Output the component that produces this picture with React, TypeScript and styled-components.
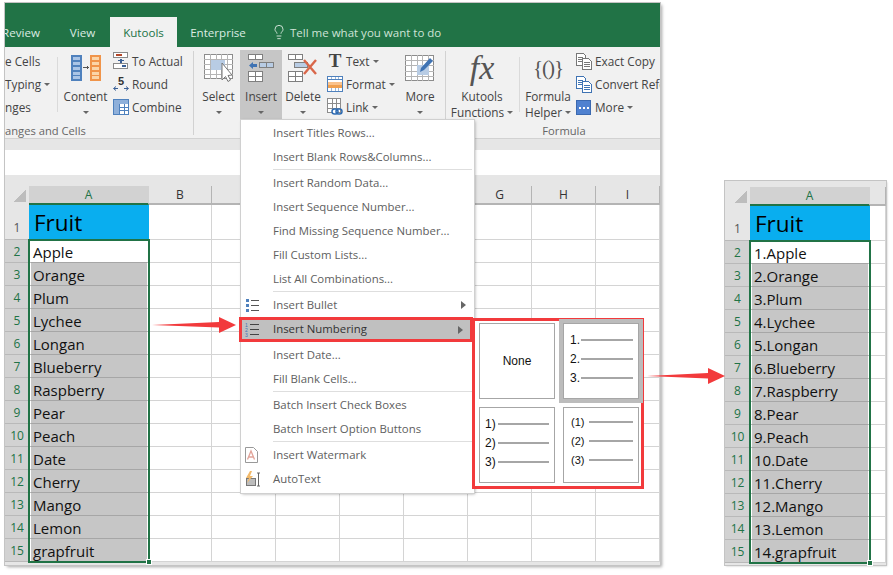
import React, { FunctionComponent } from 'react'
import styled, { createGlobalStyle } from 'styled-components'
import { Lightbulb } from 'lucide-react'

const UI_FONT = '"Open Sans", "Noto Sans", sans-serif'

const GlobalStyle = createGlobalStyle`
	html, body {
		margin: 0;
		background: #fff;
		font-family: ${UI_FONT};
	}
`

const Page = styled.div`
	position: relative;
	width: 893px;
	height: 575px;
	overflow: hidden;
	display: flex;
	align-items: flex-start;
	padding: 3px 0 0 5px;
	box-sizing: border-box;
	background: #fff;
`

const ExcelWindow = styled.div`
	position: relative;
	flex: none;
	width: 655px;
	height: 562px;
	display: flex;
	flex-direction: column;
	background: #e6e6e6;
	box-shadow: 0 0 0 1px #c4c4c4, 2px 2px 3px rgba(0, 0, 0, .35);
`

const TitleBar = styled.div`
	height: 44px;
	flex: none;
	display: flex;
	align-items: flex-end;
	background: #217346;
	overflow: hidden;
`

const Tab = styled.div<{ $w: number; $active?: boolean }>`
	flex: none;
	width: ${p => p.$w}px;
	height: 30px;
	display: flex;
	align-items: center;
	justify-content: center;
	font-size: 11.6px;
	color: ${p => (p.$active ? '#217346' : '#dcebe2')};
	background: ${p => (p.$active ? '#f1f1f1' : 'transparent')};
`

const ClippedTab = styled(Tab)`
	justify-content: flex-end;
	padding-right: 15px;
	box-sizing: border-box;
	overflow: hidden;
	white-space: nowrap;
`

const TellMe = styled.div`
	margin-left: 12px;
	height: 30px;
	display: flex;
	align-items: center;
	gap: 3px;
	font-size: 11.5px;
	color: #cfe3d7;
`

const Ribbon = styled.div`
	height: 92px;
	flex: none;
	display: flex;
	background: #f1f1f1;
	border-bottom: 1px solid #d2d2d2;
	box-sizing: border-box;
	overflow: hidden;
`

const Group = styled.div<{ $w: number; $pad?: number }>`
	flex: none;
	width: ${p => p.$w}px;
	padding-left: ${p => p.$pad || 0}px;
	box-sizing: border-box;
	display: flex;
	flex-direction: column;
	overflow: hidden;
`

const GroupBody = styled.div`
	height: 73px;
	padding-top: 3px;
	box-sizing: border-box;
	display: flex;
	align-items: flex-start;
`

const GroupLabel = styled.div<{ $left?: number; $align?: string }>`
	margin-top: 3px;
	height: 16px;
	line-height: 16px;
	font-size: 11.2px;
	color: #666;
	white-space: nowrap;
	text-align: ${p => p.$align || 'left'};
	padding-left: ${p => p.$left || 0}px;
`

const GroupDivider = styled.div`
	flex: none;
	width: 1px;
	margin: 4px 0 3px;
	background: #d2d2d2;
`

const InnerDivider = styled.div<{ $right: number; $left?: number }>`
	flex: none;
	width: 1px;
	height: 55px;
	margin: 7px ${p => p.$right}px 0 ${p => p.$left || 0}px;
	background: #dadada;
`

const LargeButton = styled.div<{ $w: number; $gap?: number; $on?: boolean }>`
	flex: none;
	width: ${p => p.$w}px;
	height: 70px;
	margin-left: ${p => p.$gap || 0}px;
	display: flex;
	flex-direction: column;
	align-items: center;
	background: ${p => (p.$on ? '#c6c6c6' : 'transparent')};
	white-space: nowrap;
`

const LargeIcon = styled.div`
	height: 36px;
	flex: none;
	display: flex;
	align-items: center;
	justify-content: center;
`

const LargeLabel = styled.div<{ $first?: boolean }>`
	height: 16px;
	line-height: 16px;
	margin-top: ${p => (p.$first ? 2 : 0)}px;
	font-size: 11.8px;
	color: #444;
	display: flex;
	align-items: center;
	gap: 3px;
`

const CaretRow = styled.div`
	height: 16px;
	display: flex;
	align-items: center;
`

const Caret = styled.span`
	display: inline-block;
	flex: none;
	width: 0;
	height: 0;
	border-left: 3px solid transparent;
	border-right: 3px solid transparent;
	border-top: 3px solid #666;
`

const SmallStack = styled.div<{ $w: number; $gap?: number }>`
	flex: none;
	width: ${p => p.$w}px;
	margin-left: ${p => p.$gap || 0}px;
	display: flex;
	flex-direction: column;
	overflow: hidden;
`

const SmallRow = styled.div`
	height: 23px;
	box-sizing: border-box;
	padding-bottom: 1px;
	display: flex;
	align-items: center;
	gap: 3px;
	font-size: 11.8px;
	color: #444;
	white-space: nowrap;
`

const SmallIcon = styled.span`
	flex: none;
	width: 16px;
	height: 18px;
	display: flex;
	align-items: center;
	justify-content: center;
`

const TextGlyph = styled.span`
	font-family: "Liberation Serif", serif;
	font-weight: 700;
	font-size: 19px;
	line-height: 18px;
	color: #444;
`

const Band = styled.div<{ $h: number }>`
	flex: none;
	height: ${p => p.$h}px;
	background: #e6e6e6;
`

const FormulaBar = styled.div`
	flex: none;
	height: 25px;
	background: #fff;
`

// sheet

const SheetGrid = styled.div<{ $cols: string }>`
	position: relative;
	display: grid;
	grid-template-columns: ${p => p.$cols};
`

const Corner = styled.div`
	height: 19px;
	background: #e6e6e6;
	display: flex;
	justify-content: flex-end;
	align-items: flex-end;
	padding: 0 3px 3px 0;
	box-sizing: border-box;
`

const CornerMark = styled.div`
	width: 12px;
	height: 12px;
	background: linear-gradient(135deg, transparent 50%, #bdbdbd 50%);
`

const ColHead = styled.div<{ $on?: boolean }>`
	height: 19px;
	box-sizing: border-box;
	display: flex;
	align-items: center;
	justify-content: center;
	font-size: 12px;
	color: ${p => (p.$on ? '#217346' : '#333')};
	background: ${p => (p.$on ? '#d2d2d2' : '#e6e6e6')};
	border-right: 1px solid ${p => (p.$on ? '#d2d2d2' : '#b4b4b4')};
	border-bottom: 2px solid ${p => (p.$on ? '#217346' : '#b4b4b4')};
`

const RowHead = styled.div<{ $on?: boolean; $h: number }>`
	height: ${p => p.$h}px;
	box-sizing: border-box;
	display: flex;
	align-items: ${p => (p.$on ? 'center' : 'flex-end')};
	justify-content: center;
	padding-bottom: ${p => (p.$on ? 0 : 3)}px;
	font-size: 12px;
	color: ${p => (p.$on ? '#217346' : '#555')};
	background: ${p => (p.$on ? '#d2d2d2' : '#e6e6e6')};
	border-bottom: 1px solid #b9b9b9;
`

const HeaderCell = styled.div`
	height: 35px;
	box-sizing: border-box;
	padding: 0 0 0 5px;
	display: flex;
	align-items: center;
	font-size: 22.5px;
	color: #000;
	background: #09aeef;
`

const DataCell = styled.div<{ $grey?: boolean }>`
	height: 23px;
	box-sizing: border-box;
	padding: 2px 0 0 2px;
	display: flex;
	align-items: center;
	font-size: 15px;
	color: #111;
	white-space: nowrap;
	border-left: 2px solid #fff;
	border-right: 2px solid #fff;
	background: ${p => (p.$grey ? '#c6c6c6' : '#fff')};
	border-bottom: 1px solid #a6a6a6;
`

const BlankCell = styled.div<{ $h: number }>`
	height: ${p => p.$h}px;
	box-sizing: border-box;
	background: #fff;
	border-right: 1px solid #d4d4d4;
	border-bottom: 1px solid #d4d4d4;
`

const Selection = styled.div<{ $left: number; $top: number; $w: number; $h: number }>`
	position: absolute;
	left: ${p => p.$left}px;
	top: ${p => p.$top}px;
	width: ${p => p.$w}px;
	height: ${p => p.$h}px;
	box-sizing: border-box;
	border: 2px solid #217346;
	pointer-events: none;
	&::after {
		content: '';
		position: absolute;
		right: -4px;
		bottom: -4px;
		width: 6px;
		height: 6px;
		background: #217346;
		border: 1px solid #fff;
		box-sizing: border-box;
	}
`

const SideWindow = styled.div`
	flex: none;
	width: 161px;
	height: 384px;
	margin: 178px 0 0 65px;
	display: flex;
	flex-direction: column;
	background: #e6e6e6;
	box-shadow: 0 0 0 1px #c4c4c4, 1px 1px 2px rgba(0, 0, 0, .25);
`

// menu

const Menu = styled.div`
	position: absolute;
	left: 236px;
	top: 117px;
	width: 233px;
	height: 373px;
	box-sizing: border-box;
	padding-top: 1px;
	background: #fff;
	box-shadow: 0 0 0 1px #d0d0d0, 1px 1px 3px rgba(0, 0, 0, .35);
`

const MenuItem = styled.div<{ $on?: boolean }>`
	height: ${p => (p.$on ? 25 : 24)}px;
	box-sizing: border-box;
	display: flex;
	align-items: center;
	font-size: 11.4px;
	color: ${p => (p.$on ? '#333' : '#606060')};
	background: ${p => (p.$on ? '#c0c0c0' : 'transparent')};
	border: ${p => (p.$on ? '3px solid #f23a3c' : '0')};
	margin: ${p => (p.$on ? '0 0 1px -2px' : '0')};
	width: ${p => (p.$on ? '234px' : 'auto')};
	padding-left: ${p => (p.$on ? 3 : 4)}px;
	padding-right: ${p => (p.$on ? 7 : 8)}px;
`

const MenuIcon = styled.span`
	flex: none;
	width: 28px;
	display: flex;
	align-items: center;
`

const MenuLabel = styled.span`
	flex: 1;
	margin-top: -2px;
`

const MenuArrow = styled.span`
	flex: none;
	width: 0;
	height: 0;
	border-top: 4px solid transparent;
	border-bottom: 4px solid transparent;
	border-left: 5px solid #666;
`

const MenuSep = styled.div`
	height: 2px;
	margin-left: 32px;
	margin-right: 2px;
	box-sizing: border-box;
	border-top: 1px solid #dedede;
`

const Flyout = styled.div`
	position: absolute;
	left: 231px;
	top: 198px;
	width: 172px;
	height: 171px;
	box-sizing: border-box;
	padding: 2px 4px;
	border: 3px solid #f23a3c;
	background: #fff;
	display: grid;
	grid-template-columns: 76px 76px;
	grid-auto-rows: 76px;
	gap: 8px;
`

const NumberCard = styled.div<{ $on?: boolean; $left: number; $bottom: number }>`
	box-sizing: border-box;
	border: 1px solid #a6a6a6;
	background: #fff;
	display: flex;
	flex-direction: column;
	justify-content: center;
	padding: 0 5px ${p => p.$bottom}px ${p => p.$left}px;
	box-shadow: ${p => (p.$on ? '0 0 0 4px #bcbcbc' : 'none')};
	font-family: "Liberation Sans", Arial, sans-serif;
	color: #111;
`

const NoneLabel = styled.div`
	text-align: center;
	font-size: 12px;
	padding-top: 5px;
`

const NumberRow = styled.div<{ $size: number }>`
	height: 19px;
	display: flex;
	align-items: center;
	justify-content: space-between;
	font-size: ${p => p.$size}px;
`

const NumberLine = styled.span<{ $w: number }>`
	flex: none;
	width: ${p => p.$w}px;
	height: 2px;
	background: #a6a6a6;
`

const Overlay = styled.svg<{ $left: number; $top: number }>`
	position: absolute;
	left: ${p => p.$left}px;
	top: ${p => p.$top}px;
`

// icons

const Svg: FunctionComponent<{ w: number; h: number; children: React.ReactNode }> = ({ w, h, children }) => (
	<svg width={w} height={h} viewBox={`0 0 ${w} ${h}`} fill="none" shapeRendering="crispEdges">
		{children}
	</svg>
)

const Column: FunctionComponent<{ x: number; stroke: string; fill: string }> = ({ x, stroke, fill }) => (
	<g>
		<rect x={x + .5} y=".5" width="10" height="25" fill={stroke} stroke={stroke} />
		{[2, 7, 12, 17, 21].map(y => (
			<rect key={y} x={x + 2} y={y} width="7" height="3" fill={fill} />
		))}
	</g>
)

const ContentIcon = () => (
	<Svg w={30} h={26}>
		<Column x={0} stroke="#4f81bd" fill="#a9c4e6" />
		<Column x={19} stroke="#f0944a" fill="#fbd5a8" />
		<rect x="12" y="12" width="5" height="1" fill="#555" />
		<path d="M16 10.5 L18 12.5 L16 14.5 Z" fill="#555" />
	</Svg>
)

const ToActualIcon = () => (
	<Svg w={16} h={18}>
		<rect x=".5" y=".5" width="14" height="5" fill="#fff" stroke="#8a8a8a" />
		<rect x="3" y="2" width="6" height="2" fill="#b5482a" />
		<rect x="7" y="7" width="2" height="4" fill="#3a5f95" />
		<rect x="5" y="8" width="6" height="1" fill="#3a5f95" />
		<rect x=".5" y="11.5" width="14" height="5" fill="#fff" stroke="#8a8a8a" />
		<rect x="9" y="13" width="4" height="2" fill="#3a5f95" />
	</Svg>
)

const RoundIcon = () => (
	<svg width="16" height="18" viewBox="0 0 16 18" fill="none">
		<text x="8" y="10" textAnchor="middle" fontFamily="Liberation Sans" fontWeight="700" fontSize="11" fill="#333">5</text>
		<path d="M1 13.5h4M15 13.5h-4" stroke="#3a5f95" />
		<path d="M3 11.5L.5 13.5 3 15.5M13 11.5l2.5 2 -2.5 2" stroke="#3a5f95" />
	</svg>
)

const CombineIcon = () => (
	<Svg w={16} h={16}>
		<rect x=".5" y=".5" width="15" height="15" fill="#fff" stroke="#4f81bd" />
		<rect x="1" y="1" width="14" height="4" fill="#8fb0da" />
		<rect x="1" y="1" width="5" height="14" fill="#8fb0da" />
		<path d="M6.5 5v10M11 5v10M6 8.5h9M6 11.5h9" stroke="#4f81bd" />
	</Svg>
)

const GridBox: FunctionComponent<{ w: number; h: number }> = ({ w, h }) => (
	<g stroke="#8c8c8c">
		<rect x=".5" y=".5" width={w - 1} height={h - 1} fill="#fff" />
		{[1, 2, 3, 4].map(i => <path key={i} d={`M${Math.round(i * w / 5) + .5} 0v${h}`} stroke="#b5b5b5" />)}
		{[1, 2, 3, 4].map(i => <path key={i} d={`M0 ${Math.round(i * h / 5) + .5}h${w}`} stroke="#b5b5b5" />)}
	</g>
)

const SelectIcon = () => (
	<Svg w={30} h={28}>
		<GridBox w={29} h={25} />
		<rect x="7" y="6" width="14" height="10" fill="#b8cce4" />
		<path d="M18 9 L18 26 L21.5 22.5 L24 27.5 L26.5 26 L24 21.5 L28 21 Z" fill="#fff" stroke="#777" shapeRendering="auto" />
	</Svg>
)

const TwoCells = () => (
	<g stroke="#7f7f7f" fill="#fff">
		<rect x=".5" y=".5" width="14" height="5" />
		<path d="M7.5 0v5" />
		<rect x=".5" y="17.5" width="14" height="10" />
		<path d="M7.5 17v10M0 22.5h14" />
	</g>
)

const InsertIcon = () => (
	<Svg w={27} h={28}>
		<TwoCells />
		<path d="M1 11.5 L5 8 V10 H9 V13 H5 V15 Z" fill="#3f73b3" shapeRendering="auto" />
		<rect x="11.5" y="8.5" width="14" height="5" fill="#b8cce4" stroke="#7f7f7f" />
		<path d="M18.5 8v5" stroke="#7f7f7f" />
	</Svg>
)

const DeleteIcon = () => (
	<Svg w={30} h={28}>
		<TwoCells />
		<rect x="6.5" y="8.5" width="13" height="5" fill="#b8cce4" stroke="#7f7f7f" />
		<path d="M16 6 L28 20 M28 6 L16 20" stroke="#d9674a" strokeWidth="2.4" shapeRendering="auto" />
	</Svg>
)

const FormatIcon = () => (
	<Svg w={16} h={16}>
		<rect x=".5" y=".5" width="15" height="15" fill="#fff" stroke="#4f81bd" />
		<path d="M1 3.5h14" stroke="#4f81bd" />
		<rect x="1" y="6" width="14" height="3" fill="#fac28c" />
		<rect x="1" y="9" width="14" height="3" fill="#f0a050" />
		<path d="M4.5 1v2M8 1v2M11.5 1v2M4.5 12v3M8 12v3M11.5 12v3" stroke="#9db8d8" />
	</Svg>
)

const LinkIcon = () => (
	<svg width="16" height="18" viewBox="0 0 16 18" fill="none">
		<g stroke="#8c8c8c" shapeRendering="crispEdges">
			<rect x=".5" y=".5" width="13" height="14" fill="#fff" />
			<path d="M5 0v14M9.5 0v14M0 5h13M0 10h13" />
		</g>
		<rect x="5" y="11" width="6" height="5" rx="2.5" stroke="#2f6cb3" strokeWidth="1.5" fill="#fff" />
		<rect x="9" y="11" width="6" height="5" rx="2.5" stroke="#2f6cb3" strokeWidth="1.5" />
	</svg>
)

const MoreGridIcon = () => (
	<Svg w={30} h={27}>
		<GridBox w={29} h={26} />
		<rect x="12" y="10" width="12" height="10" fill="#b8cce4" />
		<path d="M15 17 L16 13 L25 3 L28 6 L19 15 Z" fill="#3f73b3" shapeRendering="auto" />
	</Svg>
)

const FxGlyph = styled.span`
	font-family: "Liberation Serif", serif;
	font-style: italic;
	font-size: 34px;
	line-height: 34px;
	color: #555;
`

const BraceGlyph = styled.span`
	font-family: "Liberation Serif", serif;
	font-size: 21px;
	line-height: 30px;
	letter-spacing: -1px;
	color: #555;
`

const CopyIcon: FunctionComponent<{ color: string }> = ({ color }) => (
	<Svg w={16} h={17}>
		<path d="M.5.5h7l2 2v10h-9z" fill="#fff" stroke={color} />
		<path d="M2 4h5M2 6h5M2 8h5" stroke={color} />
		<path d="M6.5 5.5h6l3 3v8h-9z" fill="#fff" stroke={color} />
		<path d="M8 9h6M8 11h6M8 13h6" stroke={color} />
	</Svg>
)

const DotsIcon = () => (
	<Svg w={16} h={15}>
		<rect x=".5" y=".5" width="14" height="14" fill="#4f81d0" stroke="#3b69b0" />
		<path d="M3 8h2M7 8h2M11 8h2" stroke="#fff" strokeWidth="2" />
	</Svg>
)

const BulletIcon = () => (
	<Svg w={14} h={15}>
		<rect x="1" y="1" width="3" height="3" fill="#4f81bd" />
		<rect x="1" y="6" width="3" height="3" fill="#4f81bd" />
		<rect x="1" y="11" width="3" height="3" fill="#4f81bd" />
		<path d="M6 2.5h8M6 7.5h8M6 12.5h8" stroke="#555" />
	</Svg>
)

const NumberingIcon = () => (
	<svg width="14" height="15" viewBox="0 0 14 15">
		<g fontFamily="Liberation Sans" fontSize="5" fill="#3f73b3">
			<text x="0" y="4.5">1</text>
			<text x="0" y="9.5">2</text>
			<text x="0" y="14.5">3</text>
		</g>
		<path d="M5 2.5h9M5 7.5h9M5 12.5h9" stroke="#444" shapeRendering="crispEdges" />
	</svg>
)

const WatermarkIcon = () => (
	<svg width="13" height="16" viewBox="0 0 13 16" fill="none">
		<path d="M.5.5h8l4 4v11H.5z" fill="#fff" stroke="#999" />
		<path d="M2.5 12.5L6 4l3.5 8.5M4 10h4.5" stroke="#e2a399" strokeWidth="1.3" />
	</svg>
)

const AutoTextIcon = () => (
	<svg width="16" height="17" viewBox="0 0 16 17" fill="none">
		<rect x="1.5" y="7.5" width="9" height="7" fill="#bdbdbd" stroke="#777" />
		<path d="M5 0L1 7h3L2 12l6-7H5l2-5z" fill="#f2b96a" />
		<path d="M12 2h3M13.500 2v13M12 15h3" stroke="#666" />
	</svg>
)

const Arrow: FunctionComponent<{ left: number; top: number; w: number }> = ({ left, top, w }) => (
	<Overlay $left={left} $top={top} width={w} height={16} viewBox={`0 0 ${w} 16`}>
		<path d={`M0 8 L${w - 17} 5 L${w - 17} 0 L${w} 8 L${w - 17} 16 L${w - 17} 10.500 Z`} fill="#f23a3c" />
	</Overlay>
)

// data

const FRUITS = ['Apple', 'Orange', 'Plum', 'Lychee', 'Longan', 'Blueberry', 'Raspberry', 'Pear', 'Peach', 'Date', 'Cherry', 'Mango', 'Lemon', 'grapfruit']

// the letters C to F lie under the menu, so they carry no label
const OTHER_COLS = ['B', '', '', '', '', 'G', 'H', 'I']

type MenuEntry = { label: string; icon?: JSX.Element; arrow?: boolean; on?: boolean } | 'sep'

const MENU: MenuEntry[] = [
	{ label: 'Insert Titles Rows...' },
	{ label: 'Insert Blank Rows&Columns...' },
	'sep',
	{ label: 'Insert Random Data...' },
	{ label: 'Insert Sequence Number...' },
	{ label: 'Find Missing Sequence Number...' },
	{ label: 'Fill Custom Lists...' },
	{ label: 'List All Combinations...' },
	'sep',
	{ label: 'Insert Bullet', icon: <BulletIcon />, arrow: true },
	{ label: 'Insert Numbering', icon: <NumberingIcon />, arrow: true, on: true },
	{ label: 'Insert Date...' },
	{ label: 'Fill Blank Cells...' },
	'sep',
	{ label: 'Batch Insert Check Boxes' },
	{ label: 'Batch Insert Option Buttons' },
	'sep',
	{ label: 'Insert Watermark', icon: <WatermarkIcon /> },
	{ label: 'AutoText', icon: <AutoTextIcon /> },
]

const NUMBER_STYLES = [
	{ labels: ['1.', '2.', '3.'], line: 52, size: 12, left: 6, bottom: 5, on: true },
	{ labels: ['1)', '2)', '3)'], line: 51, size: 12, left: 5, bottom: 5 },
	{ labels: ['(1)', '(2)', '(3)'], line: 44, size: 11, left: 7, bottom: 8 },
]

type SheetProps = {
	cols: string
	others: string[]
	numbered?: boolean
	selLeft: number
	selWidth: number
}

const Sheet: FunctionComponent<SheetProps> = ({ cols, others, numbered, selLeft, selWidth }) => (
	<SheetGrid $cols={cols}>
		<Corner><CornerMark /></Corner>
		<ColHead $on>A</ColHead>
		{others.map((c, i) => <ColHead key={i}>{c}</ColHead>)}

		<RowHead $h={35}>1</RowHead>
		<HeaderCell>Fruit</HeaderCell>
		{others.map((c, i) => <BlankCell key={i} $h={35} />)}

		{FRUITS.map((fruit, row) => (
			<React.Fragment key={fruit}>
				<RowHead $on $h={23}>{row + 2}</RowHead>
				<DataCell $grey={row > 0}>{numbered ? `${row + 1}.${fruit}` : fruit}</DataCell>
				{others.map((c, i) => <BlankCell key={i} $h={23} />)}
			</React.Fragment>
		))}

		<Selection $left={selLeft} $top={53} $w={selWidth} $h={324} />
	</SheetGrid>
)

const App: FunctionComponent = () => (
	<Page>
		<GlobalStyle />

		<ExcelWindow>
			<TitleBar>
				<ClippedTab $w={50}>Review</ClippedTab>
				<Tab $w={55}>View</Tab>
				<Tab $w={67} $active>Kutools</Tab>
				<Tab $w={82}>Enterprise</Tab>
				<TellMe>
					<Lightbulb size={16} strokeWidth={1.3} color="#e4efe8" />
					Tell me what you want to do
				</TellMe>
			</TitleBar>

			<Ribbon>
				<Group $w={188}>
					<GroupBody>
						<SmallStack $w={52}>
							<SmallRow>e Cells</SmallRow>
							<SmallRow>Typing <Caret /></SmallRow>
							<SmallRow>nges</SmallRow>
						</SmallStack>
						<InnerDivider $right={3} />
						<LargeButton $w={49}>
							<LargeIcon><ContentIcon /></LargeIcon>
							<LargeLabel $first>Content</LargeLabel>
							<CaretRow><Caret /></CaretRow>
						</LargeButton>
						<SmallStack $w={80} $gap={3}>
							<SmallRow><SmallIcon><ToActualIcon /></SmallIcon>To Actual</SmallRow>
							<SmallRow><SmallIcon><RoundIcon /></SmallIcon>Round</SmallRow>
							<SmallRow><SmallIcon><CombineIcon /></SmallIcon>Combine</SmallRow>
						</SmallStack>
					</GroupBody>
					<GroupLabel>anges and Cells</GroupLabel>
				</Group>
				<GroupDivider />

				<Group $w={251} $pad={7}>
					<GroupBody>
						<LargeButton $w={35}>
							<LargeIcon><SelectIcon /></LargeIcon>
							<LargeLabel $first>Select</LargeLabel>
							<CaretRow><Caret /></CaretRow>
						</LargeButton>
						<LargeButton $w={42} $gap={4} $on>
							<LargeIcon><InsertIcon /></LargeIcon>
							<LargeLabel $first>Insert</LargeLabel>
							<CaretRow><Caret /></CaretRow>
						</LargeButton>
						<LargeButton $w={40} $gap={1}>
							<LargeIcon><DeleteIcon /></LargeIcon>
							<LargeLabel $first>Delete</LargeLabel>
							<CaretRow><Caret /></CaretRow>
						</LargeButton>
						<SmallStack $w={78} $gap={4}>
							<SmallRow><SmallIcon><TextGlyph>T</TextGlyph></SmallIcon>Text <Caret /></SmallRow>
							<SmallRow><SmallIcon><FormatIcon /></SmallIcon>Format <Caret /></SmallRow>
							<SmallRow><SmallIcon><LinkIcon /></SmallIcon>Link <Caret /></SmallRow>
						</SmallStack>
						<LargeButton $w={30}>
							<LargeIcon><MoreGridIcon /></LargeIcon>
							<LargeLabel $first>More</LargeLabel>
							<CaretRow><Caret /></CaretRow>
						</LargeButton>
					</GroupBody>
				</Group>
				<GroupDivider />

				<Group $w={214} $pad={6}>
					<GroupBody>
						<LargeButton $w={60}>
							<LargeIcon><FxGlyph>fx</FxGlyph></LargeIcon>
							<LargeLabel $first>Kutools</LargeLabel>
							<LargeLabel>Functions <Caret /></LargeLabel>
						</LargeButton>
						<InnerDivider $left={7} $right={6} />
						<LargeButton $w={44}>
							<LargeIcon><BraceGlyph>{'{()}'}</BraceGlyph></LargeIcon>
							<LargeLabel $first>Formula</LargeLabel>
							<LargeLabel>Helper <Caret /></LargeLabel>
						</LargeButton>
						<SmallStack $w={84} $gap={6}>
							<SmallRow><SmallIcon><CopyIcon color="#777" /></SmallIcon>Exact Copy</SmallRow>
							<SmallRow><SmallIcon><CopyIcon color="#3f73b3" /></SmallIcon>Convert Refe</SmallRow>
							<SmallRow><SmallIcon><DotsIcon /></SmallIcon>More <Caret /></SmallRow>
						</SmallStack>
					</GroupBody>
					<GroupLabel $align="center" $left={16}>Formula</GroupLabel>
				</Group>
			</Ribbon>

			<Band $h={11} />
			<FormulaBar />
			<Band $h={11} />

			<Sheet
				cols="24px 120px 63px repeat(7, 64px)"
				others={OTHER_COLS}
				selLeft={23}
				selWidth={122}
			/>

			<Menu>
				{MENU.map((item, i) =>
					item === 'sep'
						? <MenuSep key={i} />
						: (
							<MenuItem key={item.label} $on={item.on}>
								<MenuIcon>{item.icon}</MenuIcon>
								<MenuLabel>{item.label}</MenuLabel>
								{item.arrow && <MenuArrow />}
							</MenuItem>
						))}
				<Flyout>
					<NumberCard $left={5} $bottom={5}><NoneLabel>None</NoneLabel></NumberCard>
					{NUMBER_STYLES.map(s => (
						<NumberCard key={s.labels[0]} $on={s.on} $left={s.left} $bottom={s.bottom}>
							{s.labels.map(l => (
								<NumberRow key={l} $size={s.size}>
									{l}
									<NumberLine $w={s.line} />
								</NumberRow>
							))}
						</NumberCard>
					))}
				</Flyout>
			</Menu>
		</ExcelWindow>

		<SideWindow>
			<Band $h={6} />
			<Sheet
				cols="25px 120px 16px"
				others={['']}
				numbered
				selLeft={24}
				selWidth={122}
			/>
		</SideWindow>

		<Arrow left={152} top={317} w={84} />
		<Arrow left={647} top={368} w={78} />
	</Page>
)

export default App
